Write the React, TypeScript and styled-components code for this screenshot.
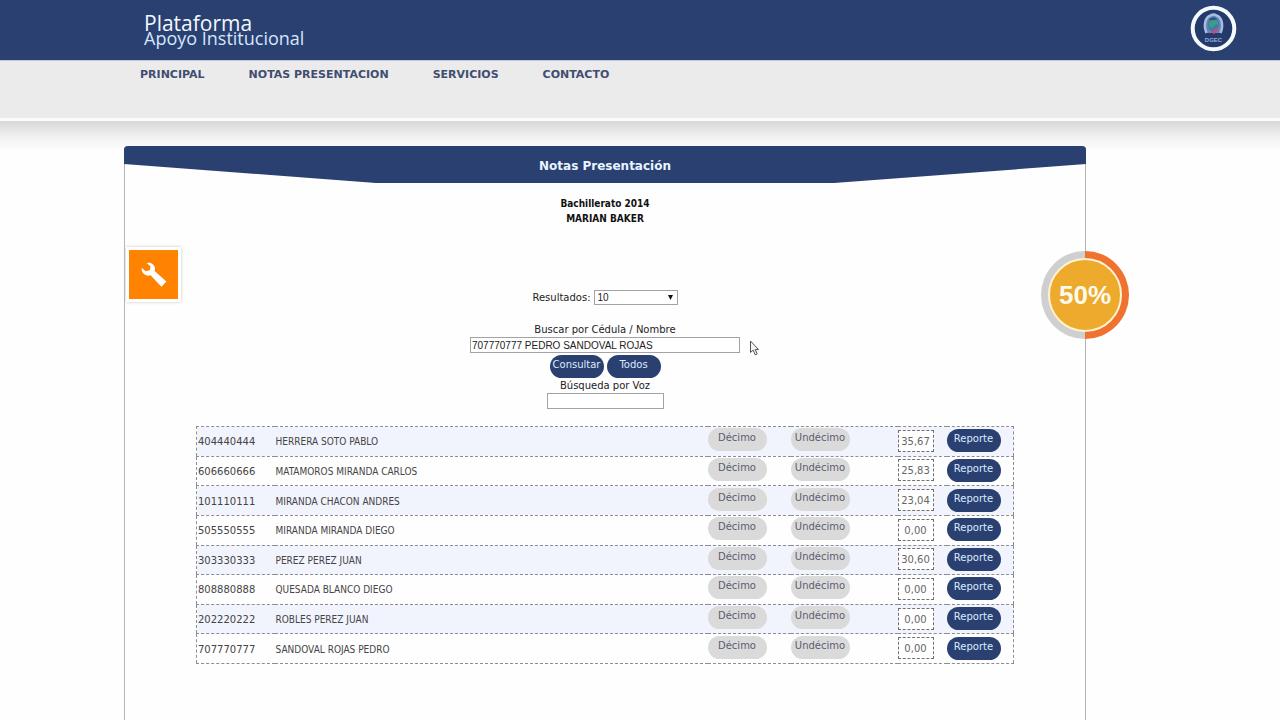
import React from "react";
import styled, { createGlobalStyle, css } from "styled-components";

const navy = "#2a4071";
const wideFont = `"DejaVu Sans", Verdana, sans-serif`;

const GlobalStyle = createGlobalStyle`
  *, *::before, *::after { box-sizing: border-box; }
  body {
    margin: 0;
    background: #fefefe;
    color: #222;
    font-family: "DejaVu Sans Condensed", "DejaVu Sans", Verdana, sans-serif;
    font-size: 10px;
    line-height: 15px;
  }
`;

const Page = styled.div`
  display: flex;
  flex-direction: column;
  min-height: 100vh;
`;

const TopBar = styled.header`
  display: flex;
  align-items: center;
  justify-content: space-between;
  height: 60px;
  padding: 0 43px 4px 144px;
  background: ${navy};
`;

const Brand = styled.div`
  padding-top: 4px;
  color: #d5e6fc;
  font-family: "Open Sans", "Noto Sans", sans-serif;
`;

const BrandName = styled.div`
  font-size: 21px;
  line-height: 16px;
  color: #f2f8ff;
`;

const BrandTagline = styled.div`
  font-size: 18px;
  line-height: 14px;
`;

const NavBar = styled.nav`
  display: flex;
  gap: 44px;
  height: 61px;
  padding: 6px 140px 0;
  background: #ebebeb;
  border-top: 1px solid #c3c8d6;
  border-bottom: 3px solid #fbfbfb;
`;

const NavLink = styled.a`
  color: #414d70;
  font-family: ${wideFont};
  font-size: 11px;
  font-weight: bold;
  text-decoration: none;
`;

const Main = styled.main`
  display: flex;
  flex: 1;
  padding: 25px 194px 0 124px;
  background: linear-gradient(#d8d8d8, #f3f3f3 18px, #fefefe 30px) no-repeat;
  background-size: 100% 30px;
`;

const Panel = styled.section`
  position: relative;
  flex: 1;
  border: solid #b4b4b4;
  border-width: 0 1px;
  border-radius: 4px 4px 0 0;
  background: #fefefe;
`;

const PanelTitle = styled.h1`
  height: 37px;
  margin: 0 -1px;
  color: #e8f4ff;
  background: ${navy};
  border-radius: 4px 4px 0 0;
  clip-path: polygon(0 0, 100% 0, 100% 18px, calc(100% - 252px) 100%, 252px 100%, 0 18px);
  font-family: ${wideFont};
  font-size: 12px;
  line-height: 41px;
  text-align: center;
`;

const PanelBody = styled.div`
  display: flex;
  flex-direction: column;
  align-items: center;
  padding: 13px 71px 24px;
`;

const Heading = styled.h2`
  margin: 0;
  color: #111;
  font-size: 10px;
  line-height: 15px;
  text-align: center;
`;

const SearchForm = styled.form`
  display: flex;
  flex-direction: column;
  align-items: center;
  margin: 64px 0 17px;
  font-family: ${wideFont};
`;

const ResultsRow = styled.div`
  display: flex;
  gap: 3px;
  margin-bottom: 17px;
`;

const fieldStyle = css`
  border: 1px solid #a3a3a3;
  border-radius: 0;
  background: #fff;
  color: #222;
  font-family: "Liberation Sans", Arial, sans-serif;
  font-size: 10px;
  outline: none;
`;

const SelectWrap = styled.span`
  position: relative;
  display: flex;
`;

const Select = styled.select`
  ${fieldStyle}
  appearance: none;
  width: 84px;
  height: 15px;
  padding: 0 3px;
`;

const SelectArrow = styled.svg`
  position: absolute;
  top: 5px;
  right: 5px;
  pointer-events: none;
`;

const SearchWrap = styled.div`
  position: relative;
  display: flex;
`;

const Input = styled.input<{ $wide?: boolean }>`
  ${fieldStyle}
  width: ${(p) => (p.$wide ? 270 : 117)}px;
  height: 16px;
  padding: 0 1px;
`;

const Pointer = styled.svg`
  position: absolute;
  top: 3px;
  left: 279px;
`;

const ButtonRow = styled.div`
  display: flex;
  gap: 3px;
  margin-top: 2px;
`;

const Pill = styled.button<{ $muted?: boolean }>`
  display: block;
  width: ${(p) => (p.$muted ? 59 : 54)}px;
  height: 23px;
  padding: 0 0 4px;
  border: 0;
  border-radius: 12px;
  background: ${(p) => (p.$muted ? "#dadada" : navy)};
  color: ${(p) => (p.$muted ? "#5a5c70" : "#dcebff")};
  font-family: ${wideFont};
  font-size: 10px;
  line-height: 19px;
  text-align: center;
  white-space: nowrap;
`;

const GradesTable = styled.table`
  width: 100%;
  height: 238px;
  table-layout: fixed;
  border-collapse: collapse;
  border: 1px dashed #8d8d95;
`;

const Column = styled.col<{ $width?: number }>`
  width: ${(p) => (p.$width ? `${p.$width}px` : "auto")};
`;

const Row = styled.tr`
  border-bottom: 1px dashed #8d8d95;

  &:nth-child(odd) {
    background: #f1f3fd;
  }
`;

const Cell = styled.td<{ $raised?: boolean; $text?: boolean }>`
  padding: ${(p) => (p.$raised ? "0 0 3px" : p.$text ? "1px 0 0 1px" : "0 0 1px")};
  color: #444;
  white-space: nowrap;
`;

const IdCell = styled(Cell)`
  font-family: ${wideFont};
`;

const Score = styled.div`
  width: 36px;
  height: 22px;
  border: 1px dashed #6f6f76;
  background: #fff;
  color: #666;
  font-family: ${wideFont};
  line-height: 21px;
  text-align: center;
`;

const ToolButton = styled.button`
  position: absolute;
  top: 101px;
  left: 1px;
  display: flex;
  align-items: center;
  justify-content: center;
  width: 55px;
  height: 55px;
  padding: 0;
  border: 3px solid #fff;
  background: #ff8201;
  box-shadow: 0 0 3px #c4c4c4;
`;

const Progress = styled.div`
  position: absolute;
  top: 105px;
  right: -44px;
  display: flex;
  align-items: center;
  justify-content: center;
  width: 88px;
  height: 88px;
  border-radius: 50%;
  background: conic-gradient(#f0722f 50%, #cfcfcf 50%);
`;

const ProgressValue = styled.div`
  width: 74px;
  height: 74px;
  border: 2px solid #fff3d2;
  border-radius: 50%;
  background: #edaa2c;
  color: #fffaf0;
  font-family: "Liberation Sans", Arial, sans-serif;
  font-size: 26px;
  font-weight: bold;
  line-height: 71px;
  text-align: center;
`;

const navItems = ["PRINCIPAL", "NOTAS PRESENTACION", "SERVICIOS", "CONTACTO"];

const students = [
  { id: "404440444", name: "HERRERA SOTO PABLO", score: "35,67" },
  { id: "606660666", name: "MATAMOROS MIRANDA CARLOS", score: "25,83" },
  { id: "101110111", name: "MIRANDA CHACON ANDRES", score: "23,04" },
  { id: "505550555", name: "MIRANDA MIRANDA DIEGO", score: "0,00" },
  { id: "303330333", name: "PEREZ PEREZ JUAN", score: "30,60" },
  { id: "808880888", name: "QUESADA BLANCO DIEGO", score: "0,00" },
  { id: "202220222", name: "ROBLES PEREZ JUAN", score: "0,00" },
  { id: "707770777", name: "SANDOVAL ROJAS PEDRO", score: "0,00" },
];

function Crest() {
  return (
    <svg width="47" height="47" viewBox="0 0 47 47" role="img" aria-label="DGEC">
      <circle cx="23.5" cy="23.5" r="20.8" fill="#243a6b" stroke="#f4fbff" strokeWidth="4" />
      <path
        d="M16.500 28C13 20 15.500 12 20.500 10.500c2-1.200 4-1.200 6 0C31.500 12 34 20 30.500 28"
        fill="#6482b4"
        stroke="#a9bedf"
        strokeWidth="2.500"
      />
      <ellipse cx="23.500" cy="19.500" rx="5.500" ry="7" fill="#3f78b5" />
      <path d="M18.500 19c1-3 5-5 9-3l1 3-4 1-2 3-3-1z" fill="#38a07c" />
      <path d="M19 15c2-3 6-3 8-1l-4 1z" fill="#284e85" />
      <path d="M24 25l4-3-1 5-3 2-3-2z" fill="#c04f78" />
      <text
        x="23.500"
        y="37"
        textAnchor="middle"
        fill="#8fb0dc"
        fontFamily="Liberation Sans, Arial, sans-serif"
        fontSize="6"
        fontWeight="bold"
      >
        DGEC
      </text>
    </svg>
  );
}

export default function App() {
  return (
    <>
      <GlobalStyle />
      <Page>
        <TopBar>
          <Brand>
            <BrandName>Plataforma</BrandName>
            <BrandTagline>Apoyo Institucional</BrandTagline>
          </Brand>
          <Crest />
        </TopBar>
        <NavBar>
          {navItems.map((item) => (
            <NavLink key={item} href="#">
              {item}
            </NavLink>
          ))}
        </NavBar>
        <Main>
          <Panel>
            <PanelTitle>Notas Presentación</PanelTitle>
            <PanelBody>
              <Heading>
                Bachillerato 2014
                <br />
                MARIAN BAKER
              </Heading>
              <SearchForm onSubmit={(e) => e.preventDefault()}>
                <ResultsRow>
                  <label htmlFor="results">Resultados:</label>
                  <SelectWrap>
                    <Select id="results" defaultValue="10">
                      <option>10</option>
                      <option>20</option>
                      <option>50</option>
                    </Select>
                    <SelectArrow width="5" height="5" viewBox="0 0 5 5">
                      <path d="M0 0h5L2.500 5z" fill="#111" />
                    </SelectArrow>
                  </SelectWrap>
                </ResultsRow>
                <label htmlFor="query">Buscar por Cédula / Nombre</label>
                <SearchWrap>
                  <Input id="query" type="text" $wide defaultValue="707770777 PEDRO SANDOVAL ROJAS" />
                  <Pointer width="11" height="17" viewBox="0 0 11 17" aria-hidden="true">
                    <path
                      d="M1.500 1v11.500l2.700-2.400 2 4.700 2-.9-2-4.400h3.300z"
                      fill="#f4f4f4"
                      stroke="#555"
                      strokeWidth="1"
                    />
                  </Pointer>
                </SearchWrap>
                <ButtonRow>
                  <Pill type="submit">Consultar</Pill>
                  <Pill type="button">Todos</Pill>
                </ButtonRow>
                <label htmlFor="voice">Búsqueda por Voz</label>
                <Input id="voice" type="text" />
              </SearchForm>
              <GradesTable>
                <colgroup>
                  <Column $width={78} />
                  <Column />
                  <Column $width={83} />
                  <Column $width={107} />
                  <Column $width={49} />
                  <Column $width={67} />
                </colgroup>
                <tbody>
                  {students.map((s) => (
                    <Row key={s.id}>
                      <IdCell $text>{s.id}</IdCell>
                      <Cell $text>{s.name}</Cell>
                      <Cell $raised>
                        <Pill type="button" $muted>Décimo</Pill>
                      </Cell>
                      <Cell $raised>
                        <Pill type="button" $muted>Undécimo</Pill>
                      </Cell>
                      <Cell>
                        <Score>{s.score}</Score>
                      </Cell>
                      <Cell>
                        <Pill type="button">Reporte</Pill>
                      </Cell>
                    </Row>
                  ))}
                </tbody>
              </GradesTable>
            </PanelBody>
            <ToolButton type="button" aria-label="Herramientas">
              <svg width="26" height="26" viewBox="0 0 26 26">
                <path
                  d="M5.800 1C10.500-.5 15.500 4 13.600 9l11.800 10.600-5 5.200L9.600 13.200C5 15-.3 11 .8 6l4 3.200 4-1 .8-3.800z"
                  fill="#fff"
                />
              </svg>
            </ToolButton>
            <Progress>
              <ProgressValue>50%</ProgressValue>
            </Progress>
          </Panel>
        </Main>
      </Page>
    </>
  );
}
